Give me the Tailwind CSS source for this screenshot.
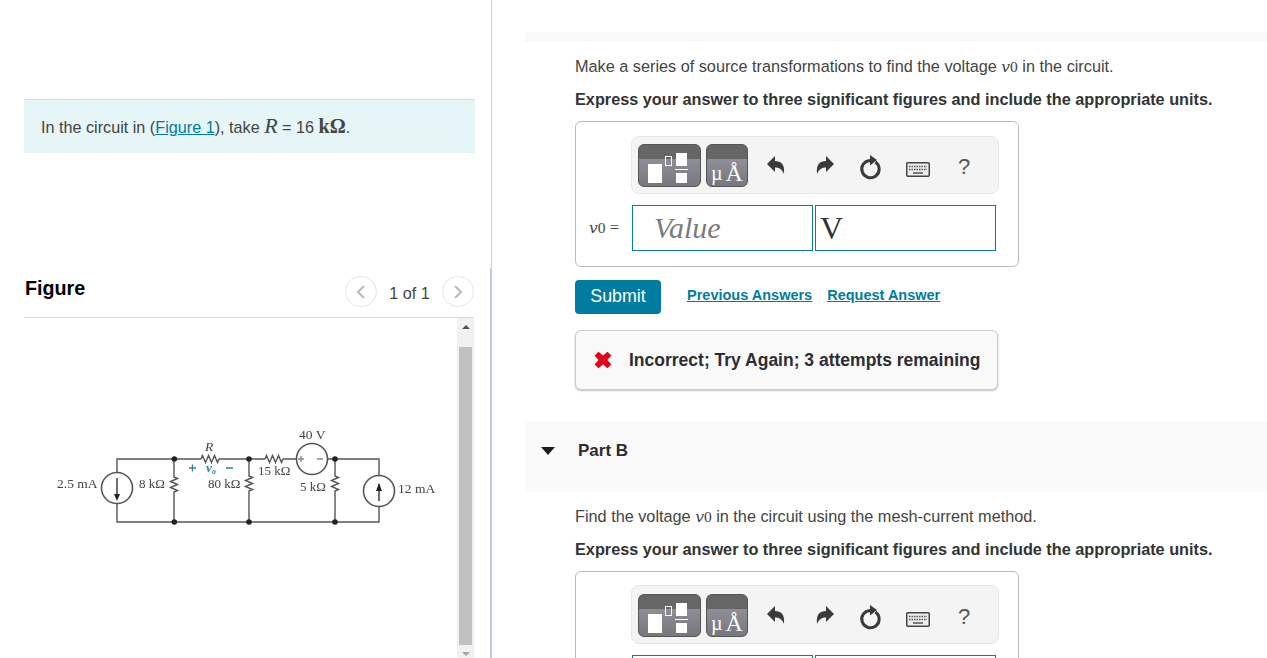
<!DOCTYPE html>
<html>
<head>
<meta charset="utf-8">
<script src="https://cdn.jsdelivr.net/npm/@tailwindcss/browser@4"></script>
</head>
<body class="bg-white">
<div class="flex w-[1267px] h-[658px] overflow-hidden font-['Liberation_Sans',Arial,sans-serif] text-[#3f3f3f] text-[16.25px]">
  <!-- left column -->
  <div class="w-[492px] shrink-0 flex flex-col">
    <div class="h-[268px] border-r border-[#cdd3d9] pl-6 pr-4 pt-[99px]">
      <div class="h-[54px] bg-[#e6f5f6] border-t border-[#dcdfe0] pl-[17px] pt-[2px] flex items-center text-[16.2px] text-[#444]">
        <span>In the circuit in (<a class="text-[#007c9f] underline">Figure 1</a>), take <span class="font-['Liberation_Serif',serif] italic text-[22px] leading-none">R</span> = 16 <span class="font-['Liberation_Serif',serif] font-bold text-[20px] leading-none">kΩ</span>.</span>
      </div>
    </div>
    <div class="h-[390px] border-r-2 border-[#b8cde0] pl-6 pr-4 flex flex-col">
      <div class="h-[50px] shrink-0 border-b border-[#dcdcdc] flex items-start">
        <h2 class="mt-[6px] text-[19.7px] leading-7 font-bold text-black pl-px">Figure</h2>
        <div class="ml-auto mt-2 flex items-center">
          <span class="w-[32px] h-[31px] rounded-full border border-[#e6e6e6] flex items-center justify-center">
            <svg width="10" height="16" viewBox="0 0 10 16"><path d="M8 2 L2 8 L8 14" fill="none" stroke="#bbb" stroke-width="2"/></svg>
          </span>
          <span class="w-[65px] text-center text-[16.2px] text-[#444] pt-[3px]">1 of 1</span>
          <span class="w-[32px] h-[31px] rounded-full border border-[#e6e6e6] flex items-center justify-center">
            <svg width="10" height="16" viewBox="0 0 10 16"><path d="M2 2 L8 8 L2 14" fill="none" stroke="#bbb" stroke-width="2"/></svg>
          </span>
        </div>
      </div>
      <div class="flex-1 flex min-h-0">
        <div class="flex-1">
          <svg class="block blur-[0.5px]" width="433" height="340" viewBox="24 318 433 340" font-family="'Liberation Serif',serif" fill="#444" font-size="13.5">
            <g fill="none" stroke="#555" stroke-width="1.4">
              <path d="M117 472.5 V459 H201 M219 459 H265 M283 459 H296.5 M327.5 459 H379 V475.5 M379 506.5 V522 H117 V503.5"/>
              <path d="M174 459 V477 l3.500 1.500 l-7 3 l7 3 l-7 3 l7 3 l-3.500 1.500 V522"/>
              <path d="M249 459 V476 l3.500 1.500 l-7 3 l7 3 l-7 3 l7 3 l-3.500 1.500 V522"/>
              <path d="M335 459 V476 l3.500 1.500 l-7 3 l7 3 l-7 3 l7 3 l-3.500 1.500 V522"/>
              <path d="M201 459 l1.500 -3.500 l3 7 l3 -7 l3 7 l3 -7 l3 7 l1.500 -3.500"/>
              <path d="M265 459 l1.500 -3.500 l3 7 l3 -7 l3 7 l3 -7 l3 7 l1.500 -3.500"/>
              <circle cx="117" cy="488" r="15.5" stroke-width="1.6"/>
              <circle cx="312" cy="459" r="15.5" stroke-width="1.6"/>
              <circle cx="379" cy="491" r="15.5" stroke-width="1.6"/>
              <path d="M117 478 V496 M379 484 V501" stroke="#333"/>
              <path d="M298 459 h6 M301 456 v6 M317 459 h6" stroke="#888"/>
              <path d="M189 468 h7 M192.500 464.500 v7 M226 468 h7" stroke="#2f84a0"/>
            </g>
            <path d="M114 494 L120 494 L117 501 Z M376 491 L382 491 L379 483 Z" fill="#222"/>
            <g fill="#222">
              <circle cx="174.300" cy="459" r="2.800"/><circle cx="174.300" cy="522" r="2.800"/>
              <circle cx="249" cy="459" r="2.800"/><circle cx="249" cy="522" r="2.800"/>
              <circle cx="335" cy="459" r="2.800"/><circle cx="335" cy="522" r="2.800"/>
            </g>
            <text x="57" y="488">2.5 mA</text>
            <text x="139" y="488" font-size="13">8 kΩ</text>
            <text x="208" y="488" font-size="13">80 kΩ</text>
            <text x="258" y="475" font-size="13">15 kΩ</text>
            <text x="300" y="491" font-size="13">5 kΩ</text>
            <text x="299" y="439">40 V</text>
            <text x="398" y="493">12 mA</text>
            <text x="205" y="451" font-style="italic">R</text>
            <text x="206" y="472" font-style="italic" font-weight="bold" fill="#2f84a0">v<tspan font-size="8" dy="2">o</tspan></text>
          </svg>
        </div>
        <div class="w-[17px] bg-[#f1f1f1] flex flex-col items-center pt-[7px] pb-[2px]">
          <div class="w-0 h-0 border-x-[4px] border-x-transparent border-b-[4px] border-b-[#505050]"></div>
          <div class="w-[13px] h-[299px] mt-[18px] bg-[#c1c1c1]"></div>
          <div class="mt-[7px] w-0 h-0 border-x-[4px] border-x-transparent border-t-[4px] border-t-[#a3a3a3]"></div>
        </div>
      </div>
    </div>
  </div>

  <!-- right column -->
  <div class="flex-1 pl-[33px] pt-8 min-w-0">
    <div class="h-[10px] bg-[#f9f9f9]"></div>
    <div class="pl-[50px]">
      <p class="mt-3 h-6 leading-6 text-[#444]">Make a series of source transformations to find the voltage <span class="font-['DejaVu_Serif',serif] italic text-[15.5px] leading-none">v</span><span class="font-['Liberation_Serif',serif] text-[15.5px] leading-none">0</span> in the circuit.</p>
      <p class="mt-[9px] h-6 leading-6 font-bold text-[#333]">Express your answer to three significant figures and include the appropriate units.</p>
      <div class="mt-[10px] w-[444px] h-[146px] border border-[#bbb] rounded-md">
        <div class="ml-[55px] mt-[14px] w-[368px] h-[58px] bg-[#f4f4f4] border border-[#e6e6e6] rounded-lg flex items-center pl-[6px]">
          <div class="w-[63px] h-[43px] rounded-md border border-[#555] bg-[linear-gradient(#666_0,#666_33%,#8f8f99_33%,#77777f_100%)] relative overflow-hidden">
            <span class="absolute left-[9px] bottom-[3px] w-[14px] h-[19px] bg-white"></span>
            <span class="absolute left-[26px] top-[11px] w-[7px] h-[10px] border border-white"></span>
            <span class="absolute left-[37px] top-[8px] w-[11px] h-[13px] bg-white"></span>
            <span class="absolute left-[36px] top-[24px] w-[13px] h-[1px] bg-white"></span>
            <span class="absolute left-[37px] bottom-[3px] w-[11px] h-[10px] bg-white"></span>
          </div>
          <div class="ml-[5px] w-[42px] h-[43px] rounded-md border border-[#555] bg-[linear-gradient(#666_0,#666_33%,#8f8f99_33%,#77777f_100%)] flex items-end justify-center font-['Liberation_Serif',serif] text-white leading-[26px]">
            <span class="text-[20px] mr-[3px]">µ</span><span class="text-[24px]">Å</span>
          </div>
          <svg class="ml-[19px]" width="18" height="20" viewBox="0 0 18 20"><path d="M0 9 L8 1 V6 C14 6 18 9 17 19 C15 14 12 12.500 8 12.500 V17 Z" fill="#3a3a3a"/></svg>
          <svg class="ml-[31px]" width="18" height="20" viewBox="0 0 18 20"><path d="M18 9 L10 1 V6 C4 6 0 9 1 19 C3 14 6 12.500 10 12.500 V17 Z" fill="#3a3a3a"/></svg>
          <svg class="ml-[25px] mt-[6px]" width="24" height="26" viewBox="0 0 24 26"><path d="M16.500 7 A8.700 8.700 0 1 1 11 5.400" fill="none" stroke="#3a3a3a" stroke-width="3"/><path d="M11 0 L18 5 L11 10.500 Z" fill="#3a3a3a"/></svg>
          <svg class="ml-[23px] mt-[9px]" width="24" height="15" viewBox="0 0 24 15"><rect x="0.750" y="0.750" width="22.500" height="13.500" rx="1" fill="#eee" stroke="#444" stroke-width="1.500"/><path d="M3 4.500 H21 M3 7.500 H21" stroke="#555" stroke-width="1.500" stroke-dasharray="1.500 1"/><path d="M7 11 H17" stroke="#555" stroke-width="1.500"/></svg>
          <span class="ml-[28px] mt-[4px] text-[22px] text-[#555] leading-none">?</span>
        </div>
        <div class="mt-[11px] flex items-center h-[46px]">
          <span class="ml-[13px] w-[43px] font-['Liberation_Serif',serif] text-[16.5px] text-[#444]"><span class="font-['DejaVu_Serif',serif] italic text-[15.5px]">v</span><span class="text-[15.5px]">0</span> =</span>
          <div class="w-[181px] h-[46px] border border-[#0a7c9c] pl-[21px] pb-[2px] flex items-center font-['Liberation_Serif',serif] italic text-[30px] text-[#7b7b7b]">Value</div>
          <div class="ml-[2px] w-[181px] h-[46px] border border-[#0a7c9c] pl-[4px] flex items-center font-['Liberation_Serif',serif] text-[32px] text-[#333]">V</div>
        </div>
      </div>
      <div class="mt-[13px] flex items-center h-[34px]">
        <div class="w-[86px] h-[34px] rounded-sm bg-[#007ca0] text-white text-[17.8px] flex items-center justify-center pb-[2px]">Submit</div>
        <a class="ml-[26px] mb-[3px] text-[14.5px] font-bold text-[#007c9f] underline">Previous Answers</a>
        <a class="ml-[15px] mb-[3px] text-[14.5px] font-bold text-[#007c9f] underline">Request Answer</a>
      </div>
      <div class="mt-4 w-[423px] h-[60px] bg-[#f9f9f9] border border-[#ccc] rounded-md shadow-[0_1px_2px_rgba(0,0,0,0.25)] flex items-center pl-[17px]">
        <svg width="20" height="20" viewBox="0 0 18 18"><path d="M2.500 5 L5 2.500 L9 6 L13 2.500 L15.500 5 L12 9 L15.500 13 L13 15.500 L9 12 L5 15.500 L2.500 13 L6 9 Z" fill="#e2001a" stroke="#e2001a" stroke-width="1.500"/></svg>
        <span class="ml-[16px] text-[17.5px] font-bold text-[#2d2d33] pt-[1px]">Incorrect; Try Again; 3 attempts remaining</span>
      </div>
    </div>
    <div class="mt-[31px] h-[71px] bg-[#f9f9f9] flex items-center pl-4">
      <div class="w-0 h-0 mb-[11px] border-x-[7px] border-x-transparent border-t-[8px] border-t-[#1f1f1f]"></div>
      <span class="ml-[23px] text-[17px] font-bold text-[#2d2d2d] pb-[12px]">Part B</span>
    </div>
    <div class="pl-[50px]">
      <p class="mt-3 h-6 leading-6 text-[#444]">Find the voltage <span class="font-['DejaVu_Serif',serif] italic text-[15.5px] leading-none">v</span><span class="font-['Liberation_Serif',serif] text-[15.5px] leading-none">0</span> in the circuit using the mesh-current method.</p>
      <p class="mt-[9px] h-6 leading-6 font-bold text-[#333]">Express your answer to three significant figures and include the appropriate units.</p>
      <div class="mt-[10px] w-[444px] h-[146px] border border-[#bbb] rounded-md">
        <div class="ml-[55px] mt-[13px] w-[368px] h-[59px] bg-[#f4f4f4] border border-[#e6e6e6] rounded-lg flex items-center pl-[6px]">
          <div class="w-[63px] h-[43px] mt-[2px] rounded-md border border-[#555] bg-[linear-gradient(#666_0,#666_33%,#8f8f99_33%,#77777f_100%)] relative overflow-hidden">
            <span class="absolute left-[9px] bottom-[3px] w-[14px] h-[19px] bg-white"></span>
            <span class="absolute left-[26px] top-[11px] w-[7px] h-[10px] border border-white"></span>
            <span class="absolute left-[37px] top-[8px] w-[11px] h-[13px] bg-white"></span>
            <span class="absolute left-[36px] top-[24px] w-[13px] h-[1px] bg-white"></span>
            <span class="absolute left-[37px] bottom-[3px] w-[11px] h-[10px] bg-white"></span>
          </div>
          <div class="ml-[5px] mt-[2px] w-[42px] h-[43px] rounded-md border border-[#555] bg-[linear-gradient(#666_0,#666_33%,#8f8f99_33%,#77777f_100%)] flex items-end justify-center font-['Liberation_Serif',serif] text-white leading-[26px]">
            <span class="text-[20px] mr-[3px]">µ</span><span class="text-[24px]">Å</span>
          </div>
          <svg class="ml-[19px]" width="18" height="20" viewBox="0 0 18 20"><path d="M0 9 L8 1 V6 C14 6 18 9 17 19 C15 14 12 12.500 8 12.500 V17 Z" fill="#3a3a3a"/></svg>
          <svg class="ml-[31px]" width="18" height="20" viewBox="0 0 18 20"><path d="M18 9 L10 1 V6 C4 6 0 9 1 19 C3 14 6 12.500 10 12.500 V17 Z" fill="#3a3a3a"/></svg>
          <svg class="ml-[25px] mt-[6px]" width="24" height="26" viewBox="0 0 24 26"><path d="M16.500 7 A8.700 8.700 0 1 1 11 5.400" fill="none" stroke="#3a3a3a" stroke-width="3"/><path d="M11 0 L18 5 L11 10.500 Z" fill="#3a3a3a"/></svg>
          <svg class="ml-[23px] mt-[9px]" width="24" height="15" viewBox="0 0 24 15"><rect x="0.750" y="0.750" width="22.500" height="13.500" rx="1" fill="#eee" stroke="#444" stroke-width="1.500"/><path d="M3 4.500 H21 M3 7.500 H21" stroke="#555" stroke-width="1.500" stroke-dasharray="1.500 1"/><path d="M7 11 H17" stroke="#555" stroke-width="1.500"/></svg>
          <span class="ml-[28px] mt-[4px] text-[22px] text-[#555] leading-none">?</span>
        </div>
        <div class="mt-[11px] flex items-center h-[46px]">
          <span class="ml-[13px] w-[43px]"></span>
          <div class="w-[181px] h-[46px] border border-[#0a7c9c]"></div>
          <div class="ml-[2px] w-[181px] h-[46px] border border-[#0a7c9c]"></div>
        </div>
      </div>
    </div>
  </div>
</div>
</body>
</html>
